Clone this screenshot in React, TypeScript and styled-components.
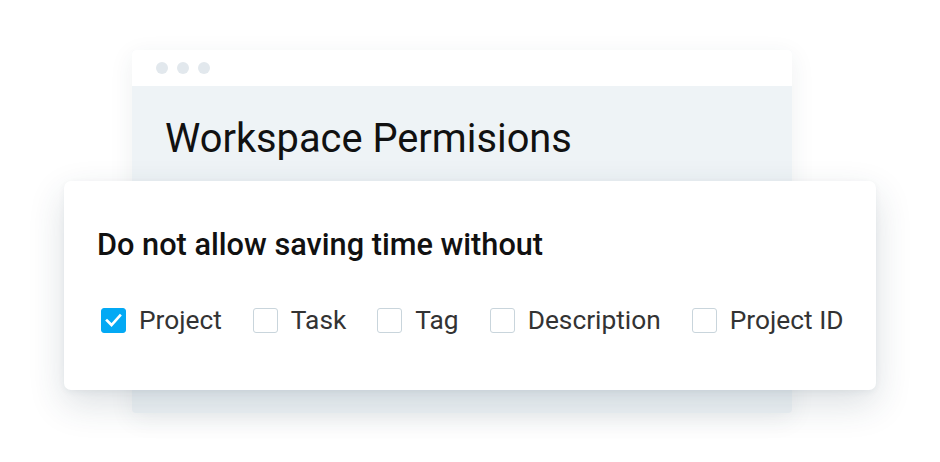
import React from "react";
import styled, { createGlobalStyle } from "styled-components";

const Global = createGlobalStyle`
  html, body { margin: 0; padding: 0; background: #ffffff; }
  body { font-family: Roboto, "Liberation Sans", Arial, sans-serif; }
`;

const Stage = styled.div`
  position: relative;
  width: 940px;
  height: 462px;
  overflow: hidden;
  background: #ffffff;
`;

const Window = styled.div`
  position: absolute;
  left: 132px;
  top: 50px;
  width: 660px;
  height: 363px;
  border-radius: 4px;
  overflow: hidden;
  background: #eef3f6;
  box-shadow: 0 6px 24px rgba(40, 60, 80, 0.08);
  display: flex;
  flex-direction: column;
`;

const TitleBar = styled.div`
  height: 36px;
  background: #ffffff;
  display: flex;
  align-items: center;
  gap: 9px;
  padding-left: 24px;
`;

const Dot = styled.span`
  width: 12px;
  height: 12px;
  border-radius: 50%;
  background: #e2e8ed;
`;

const WindowBody = styled.div`
  flex: 1;
  padding: 30px 0 0 33px;
`;

const Title = styled.h1`
  margin: 0;
  font-weight: 400;
  font-size: 39.8px;
  line-height: 46px;
  color: #111111;
`;

const Card = styled.div`
  position: absolute;
  left: 64px;
  top: 181px;
  width: 812px;
  height: 209px;
  box-sizing: border-box;
  background: #ffffff;
  border-radius: 7px;
  box-shadow: 0 14px 36px rgba(40, 60, 80, 0.16), 0 2px 6px rgba(40, 60, 80, 0.06);
  padding: 46px 0 0 33px;
`;

const Heading = styled.h2`
  margin: 0;
  font-weight: 500;
  font-size: 30.7px;
  line-height: 36px;
  color: #111111;
`;

const Options = styled.div`
  display: flex;
  align-items: center;
  gap: 31px;
  margin-top: 42px;
  padding-left: 4px;
`;

const Option = styled.label`
  display: flex;
  align-items: center;
  gap: 13px;
  font-size: 26.3px;
  line-height: 30px;
  color: #333333;
`;

const Box = styled.span<{ $checked?: boolean }>`
  width: 25px;
  height: 25px;
  box-sizing: border-box;
  border-radius: 3px;
  border: 1px solid ${(p) => (p.$checked ? "#03a9f4" : "#c9d5dc")};
  background: ${(p) => (p.$checked ? "#03a9f4" : "#ffffff")};
  display: flex;
  align-items: center;
  justify-content: center;
`;

const items = [
  { label: "Project", checked: true },
  { label: "Task", checked: false },
  { label: "Tag", checked: false },
  { label: "Description", checked: false },
  { label: "Project ID", checked: false },
];

export default function App() {
  return (
    <Stage>
      <Global />
      <Window>
        <TitleBar>
          <Dot />
          <Dot />
          <Dot />
        </TitleBar>
        <WindowBody>
          <Title>Workspace Permisions</Title>
        </WindowBody>
      </Window>
      <Card>
        <Heading>Do not allow saving time without</Heading>
        <Options>
          {items.map((it) => (
            <Option key={it.label}>
              <Box $checked={it.checked}>
                {it.checked && (
                  <svg width="17" height="14" viewBox="0 0 17 14">
                    <path d="M2 7.5 L6.5 12 L15 2.5" fill="none" stroke="#ffffff" strokeWidth="2.6" strokeLinecap="square" />
                  </svg>
                )}
              </Box>
              {it.label}
            </Option>
          ))}
        </Options>
      </Card>
    </Stage>
  );
}
